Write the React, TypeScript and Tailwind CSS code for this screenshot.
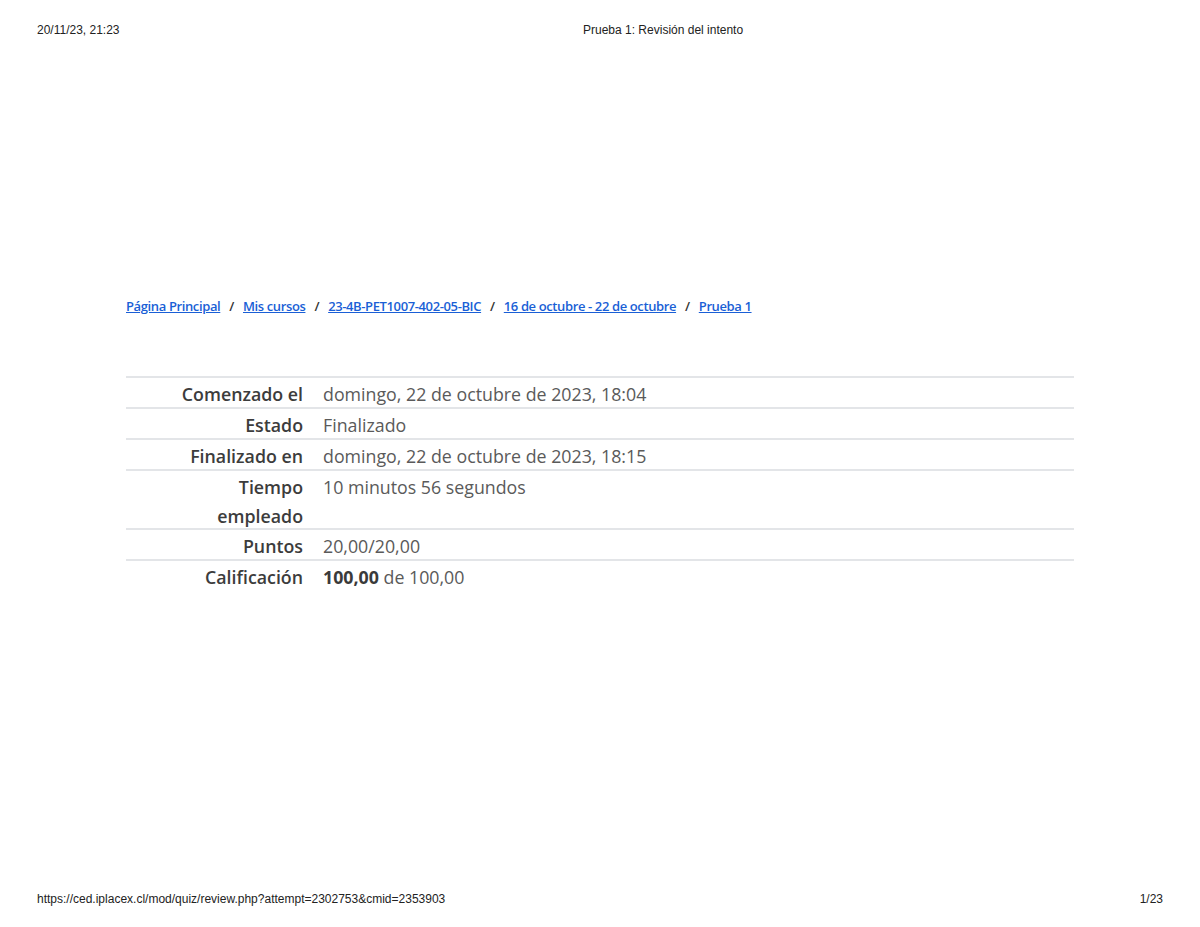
import React from 'react';

const crumbs = ['Página Principal', 'Mis cursos', '23-4B-PET1007-402-05-BIC', '16 de octubre - 22 de octubre', 'Prueba 1'];

const rows: { label: React.ReactNode; value: React.ReactNode; tall?: boolean }[] = [
  { label: 'Comenzado el', value: 'domingo, 22 de octubre de 2023, 18:04' },
  { label: 'Estado', value: 'Finalizado' },
  { label: 'Finalizado en', value: 'domingo, 22 de octubre de 2023, 18:15' },
  { label: <>Tiempo<br />empleado</>, value: '10 minutos 56 segundos', tall: true },
  { label: 'Puntos', value: '20,00/20,00' },
  {
    label: 'Calificación',
    value: (
      <>
        <b className="font-bold text-[#3a3a3a]">100,00</b> de 100,00
      </>
    ),
  },
];

export default function App() {
  return (
    <div className="flex h-[927px] w-[1200px] flex-col justify-between bg-white" style={{ fontFamily: '"Liberation Sans", Arial, sans-serif' }}>
      <div className="flex items-center px-[37px] pt-[21px] text-[12px] text-[#222]">
        <span className="w-[546px]">20/11/23, 21:23</span>
        <span>Prueba 1: Revisión del intento</span>
      </div>

      <div className="flex flex-1 flex-col px-[126px] pt-[258px]" style={{ fontFamily: '"Open Sans", "Noto Sans", sans-serif' }}>
        <nav className="flex items-center gap-[9px] text-[13px] font-semibold tracking-[-0.38px] text-[#1a5fd6]">
          {crumbs.map((c, i) => (
            <React.Fragment key={c}>
              {i > 0 && <span className="text-[#333]">/</span>}
              <a className="underline">{c}</a>
            </React.Fragment>
          ))}
        </nav>

        <div className="mt-[59px] w-[948px] border-t-2 border-[#e3e5e8]">
          {rows.map((r, i) => (
            <div
              key={i}
              className={`flex text-[17.8px] leading-[29px] ${i < rows.length - 1 ? 'border-b-2 border-[#e3e5e8]' : ''} ${r.tall ? 'h-[59px]' : 'h-[31px]'}`}
            >
              <div className="w-[177px] pt-[2px] text-right font-semibold text-[#3c3c3c]">{r.label}</div>
              <div className="pl-[20px] pt-[2px] text-[#5a5a5a]">{r.value}</div>
            </div>
          ))}
        </div>
      </div>

      <div className="flex items-center justify-between px-[37px] pb-[19px] text-[12px] text-[#222]">
        <span>https://ced.iplacex.cl/mod/quiz/review.php?attempt=2302753&amp;cmid=2353903</span>
        <span>1/23</span>
      </div>
    </div>
  );
}
